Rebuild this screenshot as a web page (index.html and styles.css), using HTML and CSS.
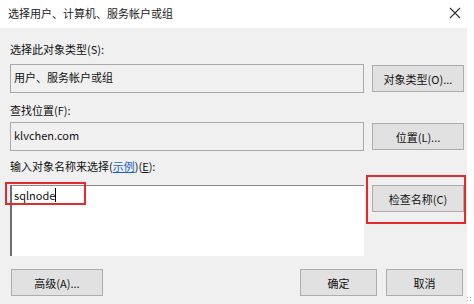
FILE: index.html
```html
<!DOCTYPE html>
<html lang="zh-CN">
<head>
<meta charset="utf-8">
<link rel="stylesheet" href="styles.css">
</head>
<body>
<div class="dialog">
  <div class="titlebar">
    <span class="title">选择用户、计算机、服务帐户或组</span>
    <svg class="close" width="12" height="12" viewBox="0 0 12 12"><path d="M1 1 L11 11 M11 1 L1 11" stroke="#333" stroke-width="1.1" fill="none"/></svg>
  </div>
  <div class="content">
    <div class="label l1">选择此对象类型(S):</div>
    <div class="row r1">
      <div class="field">用户、服务帐户或组</div>
      <div class="btn">对象类型(O)...</div>
    </div>
    <div class="label l2">查找位置(F):</div>
    <div class="row r2">
      <div class="field">klvchen.com</div>
      <div class="btn">位置(L)...</div>
    </div>
    <div class="label l3">输入对象名称来选择(<span class="link">示例</span>)(<u>E</u>):</div>
    <div class="row r3">
      <div class="area"><span class="typed">sqlnode</span><span class="caret"></span></div>
      <div class="btn">检查名称(C)</div>
    </div>
    <div class="footer">
      <div class="btn wide">高级(A)...</div>
      <div class="spacer"></div>
      <div class="btn small">确定</div>
      <div class="btn small">取消</div>
    </div>
    <div class="mark mark1"></div>
    <div class="mark mark2"></div>
    <div class="grip"></div>
  </div>
</div>
</body>
</html>
```

FILE: styles.css
```css
html, body {
  margin: 0;
  padding: 0;
  background: #ffffff;
}
body {
  width: 474px;
  height: 304px;
  overflow: hidden;
  font-family: "Noto Sans CJK SC", "Noto Sans", sans-serif;
  font-size: 11px;
  color: #111111;
}
.dialog {
  width: 467px;
}
.titlebar {
  height: 28px;
  background: #ffffff;
  display: flex;
  align-items: center;
  padding-left: 8px;
  padding-right: 12px;
  box-sizing: border-box;
}
.title {
  flex: 1;
  font-size: 11px;
  color: #1a1a1a;
  margin-top: -2px;
}
.close {
  margin-right: -6px;
  margin-top: -2px;
}
.content {
  position: relative;
  background: #f0f0f0;
  height: 276px;
  padding: 0 0 0 10px;
  box-sizing: border-box;
}
.label {
  line-height: 16px;
  height: 16px;
}
.l1 { padding-top: 13px; }
.l2 { margin-top: 9px; }
.l3 { margin-top: 7px; }
.link {
  color: #1a63c6;
  text-decoration: underline;
}
.row {
  display: grid;
  grid-template-columns: 354px 92px;
  column-gap: 8px;
  align-items: center;
}
.r1 { margin-top: 7px; }
.r2 { margin-top: 4px; }
.r3 { margin-top: 11px; align-items: start; }
.field {
  height: 29px;
  box-sizing: border-box;
  border: 1px solid #a9a9a9;
  background: #f0f0f0;
  padding: 4px 0 0 3px;
  line-height: 16px;
}
.btn {
  height: 27px;
  box-sizing: border-box;
  border: 1px solid #adadad;
  background: #e1e1e1;
  display: flex;
  align-items: center;
  justify-content: center;
  line-height: 16px;
}
.area {
  height: 71px;
  box-sizing: border-box;
  background: #ffffff;
  border-top: 1px solid #8a8a8a;
  border-left: 2px solid #6e6e6e;
  padding: 1px 0 0 2px;
  line-height: 16px;
  display: flex;
  align-items: flex-start;
}
.caret {
  display: inline-block;
  width: 1px;
  height: 14px;
  margin-top: 1px;
  background: #000;
}
.footer {
  display: flex;
  margin-top: 13px;
  padding-right: 4px;
  padding-left: 1px;
  column-gap: 9px;
}
.wide { width: 92px; }
.small { width: 77px; }
.spacer { flex: 1; }
.mark {
  position: absolute;
  border: 2px solid #e52a2e;
  box-sizing: border-box;
}
.mark1 {
  left: 5px;
  top: 154px;
  width: 81px;
  height: 23px;
}
.mark2 {
  left: 366px;
  top: 147px;
  width: 100px;
  height: 49px;
}
.grip {
  position: absolute;
  right: -5px;
  bottom: 2px;
  width: 6px;
  height: 6px;
  background:
    radial-gradient(circle, #b0b0b0 0.8px, transparent 1px) 0 0 / 3px 3px;
}
```
